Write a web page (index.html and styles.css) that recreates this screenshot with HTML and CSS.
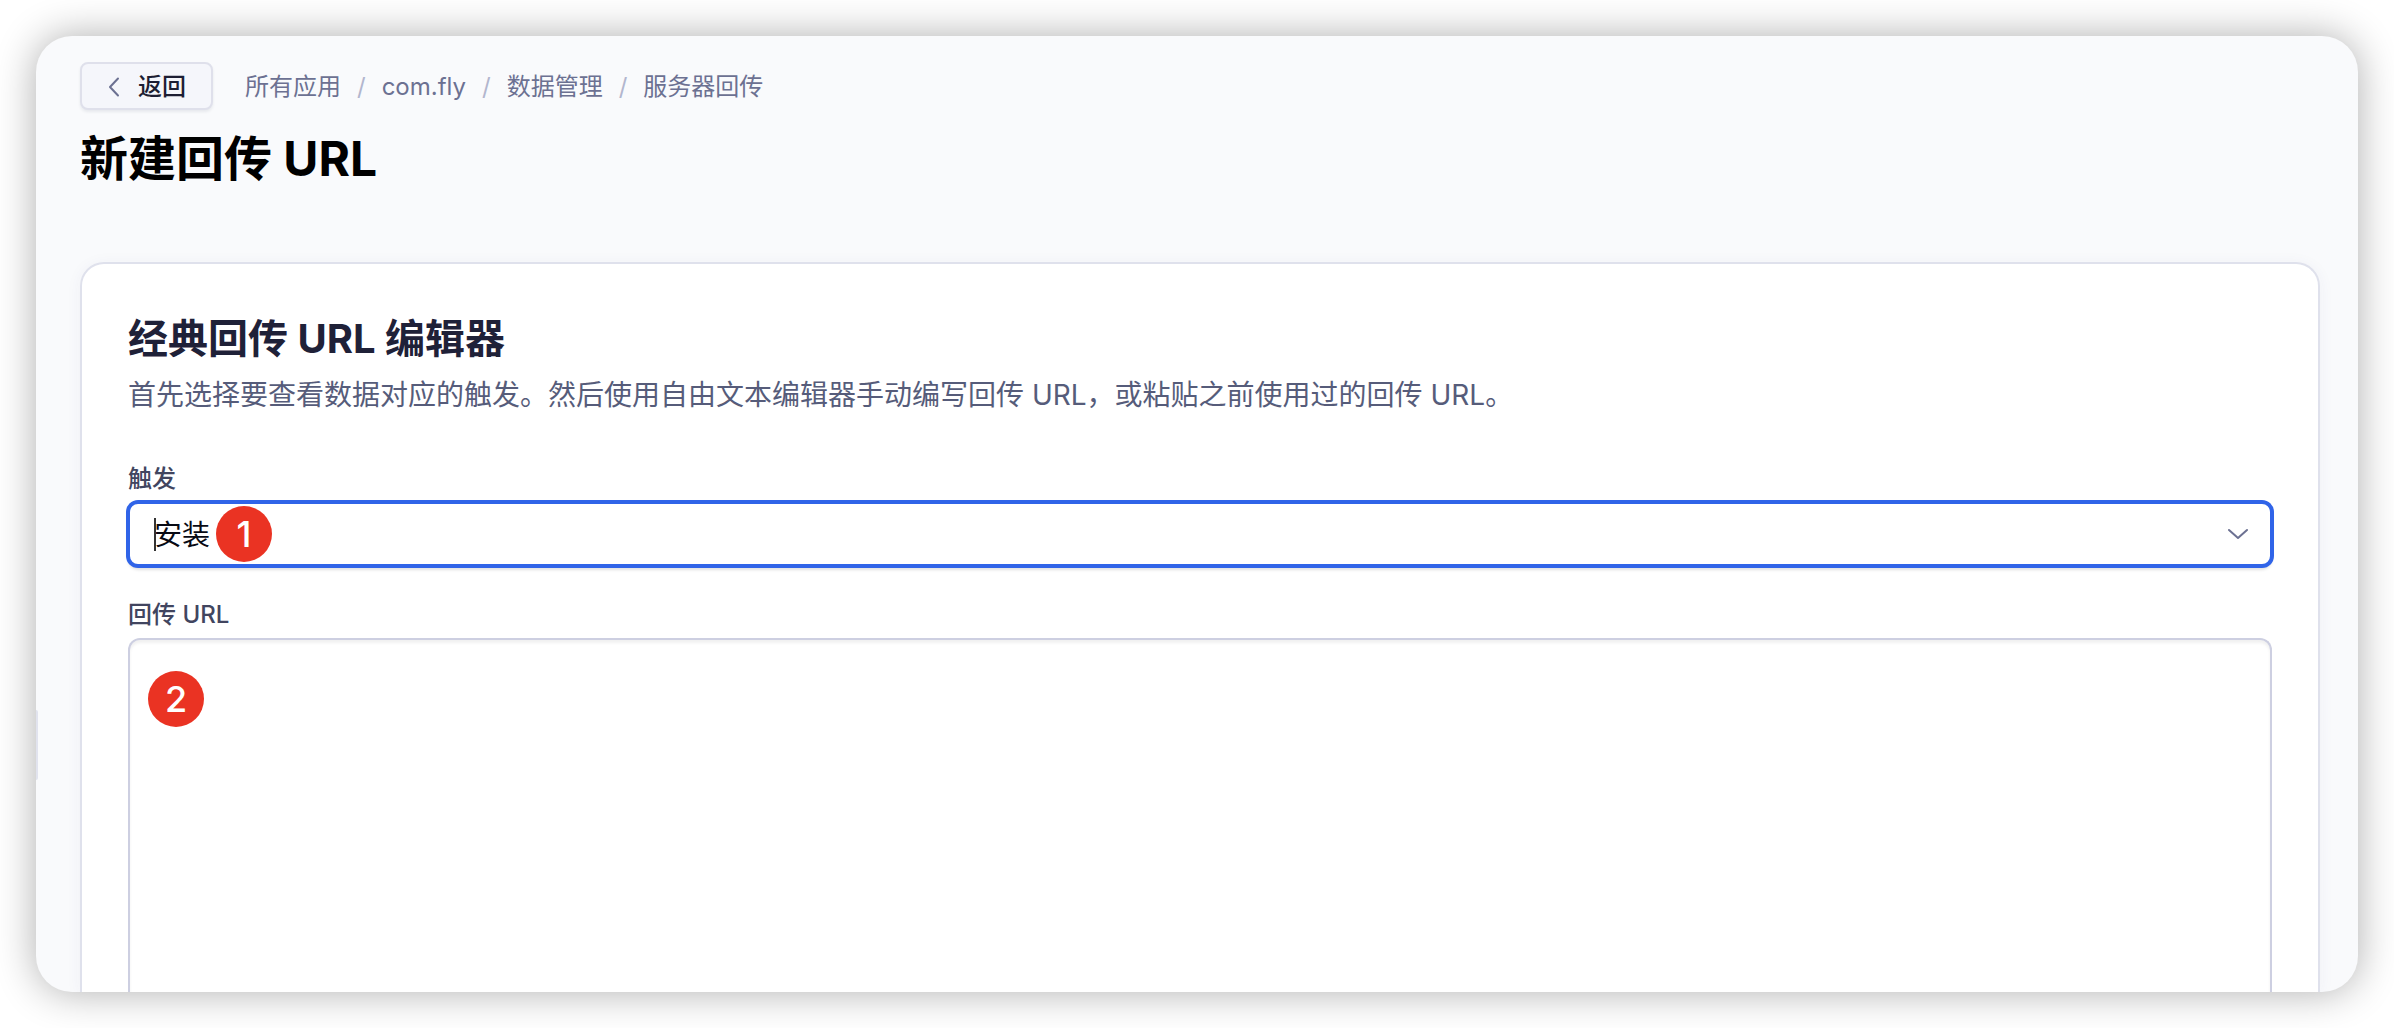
FILE: index.html
```html
<!DOCTYPE html>
<html lang="zh-CN">
<head>
<meta charset="utf-8">
<title>新建回传 URL</title>
<link rel="stylesheet" href="styles.css">
</head>
<body>
<div class="window">
  <span class="drawer-handle"></span>
  <header class="page-header">
    <div class="nav-row">
      <button class="back" type="button">
        <svg class="back-icon" viewBox="0 0 12 20" aria-hidden="true"><path d="M10 1.500L2 10l8 8.500"/></svg>
        返回
      </button>
      <nav class="breadcrumb">
        <a href="#">所有应用</a>
        <span class="sep">/</span>
        <a href="#">com.fly</a>
        <span class="sep">/</span>
        <a href="#">数据管理</a>
        <span class="sep">/</span>
        <a href="#">服务器回传</a>
      </nav>
    </div>
    <h1 class="page-title">新建回传 URL</h1>
  </header>
  <main class="card">
    <h2 class="card-title">经典回传 URL 编辑器</h2>
    <p class="card-text">首先选择要查看数据对应的触发。然后使用自由文本编辑器手动编写回传 URL，或粘贴之前使用过的回传 URL。</p>
    <div class="field">
      <label class="label" for="trigger">触发</label>
      <div class="control">
        <select class="select" id="trigger"><option>安装</option></select>
        <span class="caret"></span>
        <svg class="chevron" viewBox="0 0 20 12" aria-hidden="true"><path d="M1 2l9 8 9-8"/></svg>
        <span class="badge badge-one">1</span>
      </div>
    </div>
    <div class="field field-grow">
      <label class="label" for="url">回传 URL</label>
      <div class="control control-grow">
        <textarea class="textarea" id="url"></textarea>
        <span class="badge badge-two">2</span>
      </div>
    </div>
  </main>
</div>
</body>
</html>
```

FILE: styles.css
```css
* {
  box-sizing: border-box;
}

body {
  margin: 0;
  background: #fff;
  font-family: Inter, "Noto Sans CJK SC", sans-serif;
}

.window {
  position: relative;
  display: flex;
  flex-direction: column;
  height: calc(100vh - 72px);
  margin: 36px;
  padding: 26px 38px 0 44px;
  overflow: hidden;
  border-radius: 36px;
  background: #f9fafc;
  box-shadow: 0 0 40px rgba(0, 0, 0, 0.32);
}

.drawer-handle {
  position: absolute;
  left: 0;
  top: 674px;
  width: 2px;
  height: 70px;
  border-radius: 0 2px 2px 0;
  background: #e1e3ee;
}

.nav-row {
  display: flex;
  align-items: center;
  gap: 32px;
}

.back {
  display: flex;
  align-items: center;
  gap: 18px;
  height: 48px;
  padding: 2px 25px 0 26px;
  border: 2px solid #dfe0eb;
  border-radius: 8px;
  background: #f5f6fb;
  box-shadow: 0 2px 3px rgba(30, 32, 60, 0.08);
  color: #1d1e33;
  font-family: inherit;
  font-size: 24px;
  font-weight: 500;
  line-height: 32px;
}

.back-icon {
  width: 12px;
  height: 20px;
}

.back-icon path,
.chevron path {
  fill: none;
  stroke: #6c7192;
  stroke-width: 2;
  stroke-linecap: round;
  stroke-linejoin: round;
}

.breadcrumb {
  display: flex;
  gap: 16px;
  padding-top: 2px;
  font-size: 24px;
  line-height: 32px;
}

.breadcrumb a {
  color: #6c7192;
  text-decoration: none;
}

.sep {
  color: #b2b6ce;
}

.page-title {
  margin: 21px 0 75px;
  color: #000;
  font-size: 48px;
  font-weight: 700;
  line-height: 56px;
}

.card {
  display: flex;
  flex: 1;
  flex-direction: column;
  padding: 51px 46px 0;
  border: 2px solid #dfe1ec;
  border-bottom: 0;
  border-radius: 24px 24px 0 0;
  background: #fff;
  box-shadow: 0 2px 16px rgba(60, 64, 120, 0.05);
}

.card-title {
  margin: 0 0 12px;
  color: #1f2138;
  font-size: 40px;
  font-weight: 700;
  line-height: 48px;
}

.card-text {
  margin: 0 0 48px;
  color: #565c7a;
  font-size: 28px;
  line-height: 40px;
}

.field {
  display: flex;
  flex-direction: column;
  gap: 7px;
  margin-bottom: 33px;
}

.field-grow {
  flex: 1;
  margin-bottom: 0;
}

.label {
  color: #41455f;
  font-size: 24px;
  font-weight: 500;
  line-height: 32px;
}

.control {
  position: relative;
  display: flex;
}

.control-grow {
  flex: 1;
}

.select {
  width: 100%;
  height: 64px;
  padding: 2px 24px 0;
  appearance: none;
  border: 2px solid #3064e8;
  border-radius: 10px;
  outline: 0;
  background: #fff;
  box-shadow: 0 0 0 2px #3064e8, 0 4px 3px rgba(0, 0, 0, 0.12);
  color: #080a14;
  font-family: inherit;
  font-size: 28px;
}

.caret {
  position: absolute;
  left: 26px;
  top: 16px;
  width: 2px;
  height: 33px;
  background: #333;
}

.chevron {
  position: absolute;
  right: 24px;
  top: 26px;
  width: 20px;
  height: 12px;
}

.textarea {
  width: 100%;
  padding: 20px 24px;
  resize: none;
  border: 2px solid #cdcfe1;
  border-bottom: 0;
  border-radius: 12px 12px 0 0;
  outline: 0;
  background: #fff;
  box-shadow: inset 0 3px 3px rgba(0, 0, 0, 0.06);
  color: #080a14;
  font-family: inherit;
  font-size: 28px;
}

.badge {
  position: absolute;
  width: 56px;
  height: 56px;
  border-radius: 50%;
  background: #ea3323;
  color: #fff;
  font-size: 36px;
  font-weight: 500;
  line-height: 56px;
  text-align: center;
}

.badge-one {
  left: 88px;
  top: 4px;
}

.badge-two {
  left: 20px;
  top: 33px;
}
```
